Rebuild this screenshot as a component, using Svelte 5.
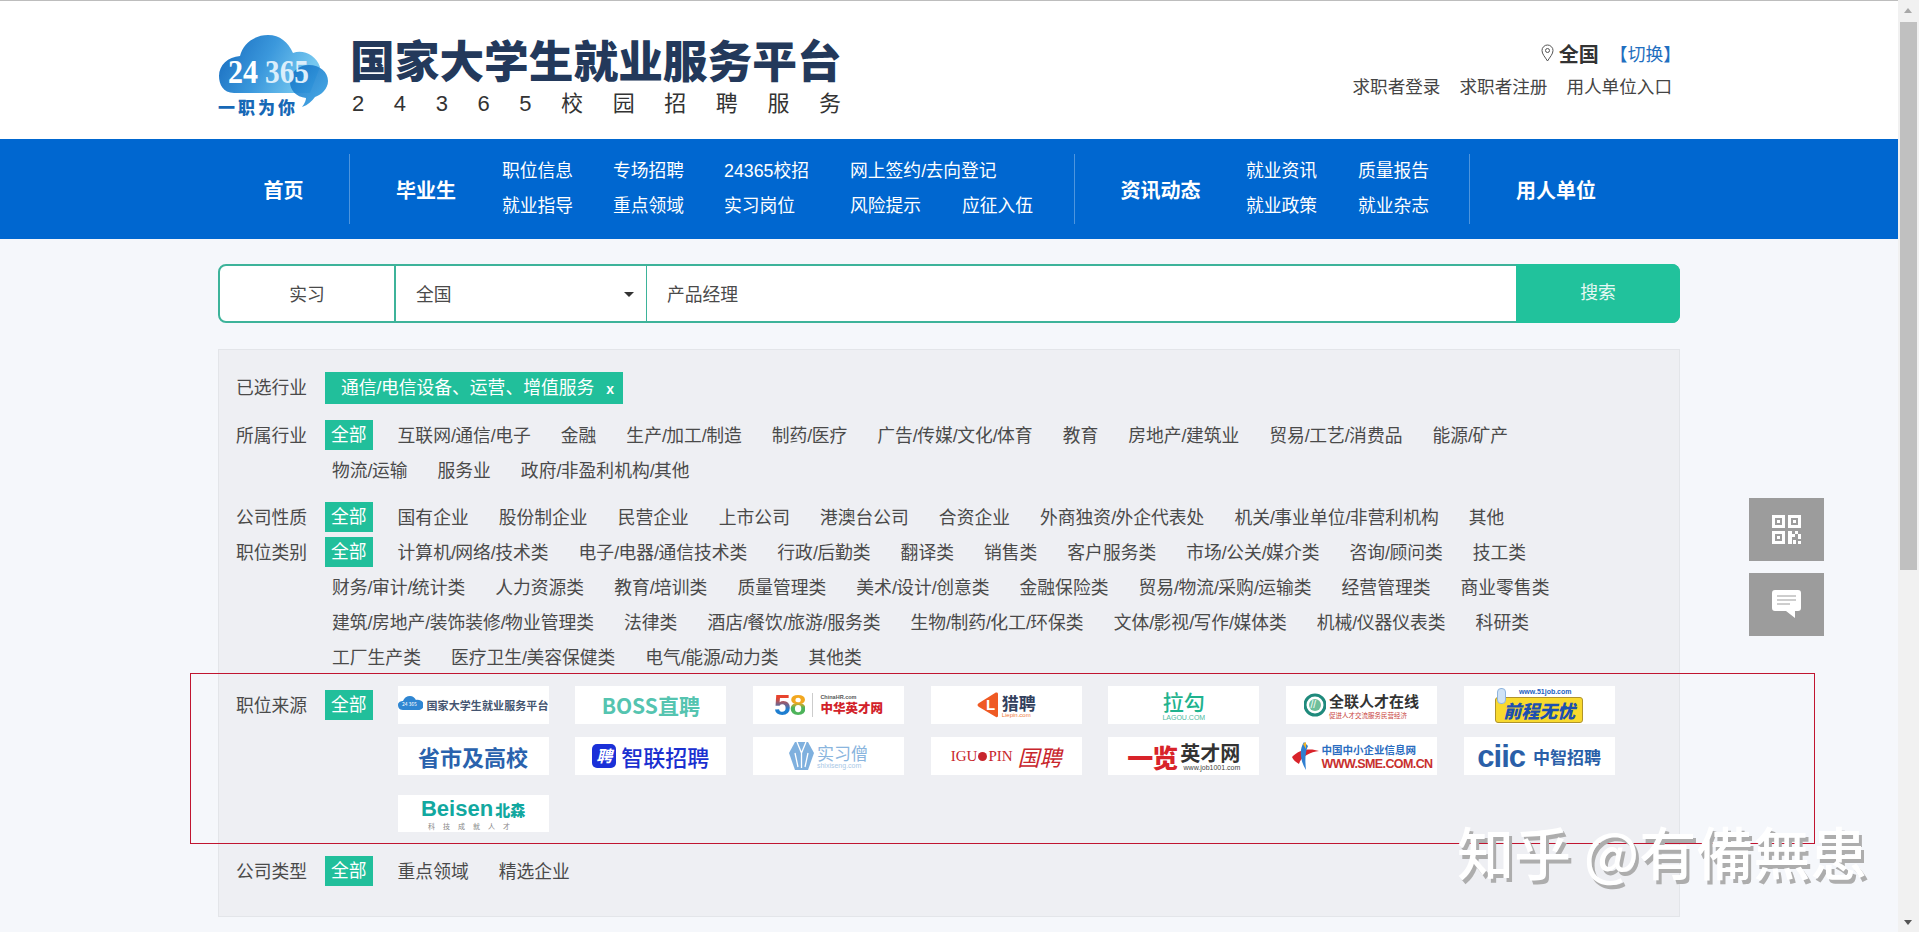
<script>
  const navGraduate = [
    { text: '职位信息' }, { text: '专场招聘' }, { text: '24365校招' }, { text: '网上签约/去向登记', wide: true },
    { text: '就业指导' }, { text: '重点领域' }, { text: '实习岗位' }, { text: '风险提示' }, { text: '应征入伍' }
  ];
  const navNews = ['就业资讯', '质量报告', '就业政策', '就业杂志'];

  const industry = ['互联网/通信/电子', '金融', '生产/加工/制造', '制药/医疗', '广告/传媒/文化/体育', '教育', '房地产/建筑业', '贸易/工艺/消费品', '能源/矿产', '物流/运输', '服务业', '政府/非盈利机构/其他'];
  const nature = ['国有企业', '股份制企业', '民营企业', '上市公司', '港澳台公司', '合资企业', '外商独资/外企代表处', '机关/事业单位/非营利机构', '其他'];
  const category = ['计算机/网络/技术类', '电子/电器/通信技术类', '行政/后勤类', '翻译类', '销售类', '客户服务类', '市场/公关/媒介类', '咨询/顾问类', '技工类', '财务/审计/统计类', '人力资源类', '教育/培训类', '质量管理类', '美术/设计/创意类', '金融保险类', '贸易/物流/采购/运输类', '经营管理类', '商业零售类', '建筑/房地产/装饰装修/物业管理类', '法律类', '酒店/餐饮/旅游/服务类', '生物/制药/化工/环保类', '文体/影视/写作/媒体类', '机械/仪器仪表类', '科研类', '工厂生产类', '医疗卫生/美容保健类', '电气/能源/动力类', '其他类'];
  const companyType = ['重点领域', '精选企业'];
</script>

{#snippet slashed(text)}
  {#each text.split('/') as part, i}{#if i}<span class="sl">/</span>{/if}{part}{/each}
{/snippet}

{#snippet options(list)}
  <div class="opts">
    <span class="all">全部</span>
    {#each list as item}
      <span class="opt">{@render slashed(item)}</span>
    {/each}
  </div>
{/snippet}

<div class="window">
  <div class="page">
    <header class="top">
      <div class="brand">
        <svg class="logo" viewBox="0 0 110 85" width="110" height="85">
          <defs>
            <linearGradient id="cloud" x1="0" y1="0" x2="1" y2="0.3">
              <stop offset="0" stop-color="#1569bd" />
              <stop offset="0.55" stop-color="#3b98dc" />
              <stop offset="1" stop-color="#76c8f0" />
            </linearGradient>
            <linearGradient id="bubble" x1="0" y1="0" x2="1" y2="1">
              <stop offset="0" stop-color="#1470c4" />
              <stop offset="1" stop-color="#3aa6e6" />
            </linearGradient>
          </defs>
          <path d="M16 60C5 60 1 51 1 43C1 32 10 24 22 23C25 10 37 2 50 2C62 2 70 9 75 20C85 16 98 22 102 34L92 60Z" fill="url(#cloud)" />
          <path d="M91 32C102 32 110 39 110 48C110 56 103 62 97 64C94 68 90 72 84 74C87 70 88 67 88 65C78 64 72 57 72 49C72 39 81 32 91 32Z" fill="url(#bubble)" opacity="0.92" />
          <text x="10" y="50" class="logo-a" textLength="30" lengthAdjust="spacingAndGlyphs">24</text>
          <text x="47" y="50" class="logo-b" textLength="44" lengthAdjust="spacingAndGlyphs">365</text>
          <text x="0" y="81" class="logo-c" textLength="77">一职为你</text>
        </svg>
        <div class="brand-text">
          <div class="brand-title">国家大学生就业服务平台</div>
          <div class="brand-sub">
            {#each ['2', '4', '3', '6', '5', '校', '园', '招', '聘', '服', '务'] as c}<span>{c}</span>{/each}
          </div>
        </div>
      </div>
      <div class="account">
        <div class="city">
          <svg width="13" height="18" viewBox="0 0 13 18" fill="none" stroke="#555" stroke-width="1">
            <path d="M6.5 17C4 13 1 10 1 6.5A5.5 5.5 0 0 1 12 6.5C12 10 9 13 6.5 17Z" />
            <circle cx="6.5" cy="6.5" r="2" />
          </svg>
          <b>全国</b>
          <span class="switch">【切换】</span>
        </div>
        <div class="links">
          <span>求职者登录</span>
          <span>求职者注册</span>
          <span>用人单位入口</span>
        </div>
      </div>
    </header>

    <nav class="nav">
      <div class="sec sec-home"><b>首页</b></div>
      <div class="sec sec-grad">
        <b class="grad-label">毕业生</b>
        <div class="grad-links">
          {#each navGraduate as l}
            <span class:wide={l.wide}>{@render slashed(l.text)}</span>
          {/each}
        </div>
      </div>
      <div class="sec sec-news">
        <b class="news-label">资讯动态</b>
        <div class="news-links">
          {#each navNews as l}<span>{l}</span>{/each}
        </div>
      </div>
      <div class="sec-employer"><b>用人单位</b></div>
    </nav>

    <div class="search">
      <div class="s-type">实习</div>
      <div class="s-city">全国<i class="caret"></i></div>
      <div class="s-key">产品经理</div>
      <div class="s-btn">搜索</div>
    </div>

    <section class="panel">
      <div class="row row-picked">
        <div class="label">已选行业</div>
        <div class="tag">{@render slashed('通信/电信设备、运营、增值服务')}<em>x</em></div>
      </div>
      <div class="row row-industry">
        <div class="label">所属行业</div>
        {@render options(industry)}
      </div>
      <div class="row row-nature">
        <div class="label">公司性质</div>
        {@render options(nature)}
      </div>
      <div class="row">
        <div class="label">职位类别</div>
        {@render options(category)}
      </div>
      <div class="row row-source">
        <div class="label">职位来源</div>
        <span class="all">全部</span>
        <div class="sources">
          <div class="src">
            <svg width="26" height="18" viewBox="0 0 26 18"><path d="M5 14C1 14 0 11 0 9C0 6 3 5 5 5C6 2 9 0 12 0C15 0 17 2 18 4C22 3 26 6 26 9C26 12 23 14 20 14Z" fill="#2f86d2" /><text x="4" y="10" class="m1">24 365</text></svg>
            <span class="s-platform">国家大学生就业服务平台</span>
          </div>
          <div class="src"><span class="s-boss">BOSS直聘</span></div>
          <div class="src">
            <span class="s-58"><i class="d5">5</i><i class="d8">8</i></span>
            <i class="s-58-line"></i>
            <span class="stack"><small class="s-hr-top">ChinaHR.com</small><span class="s-hr">中华英才网</span></span>
          </div>
          <div class="src"><span class="s-lp-wrap">
            <svg width="22" height="26" viewBox="0 0 22 26"><path d="M21 2V24C21 25 20 25.500 19 25L2 15C0 14 0 12 2 11L18 1C20 0 21 1 21 2Z" fill="#ef5a24" /><text x="9" y="18" class="m2">L</text></svg>
            <span class="stack"><span class="s-lp">猎聘</span><small class="s-lp-en">Liepin.com</small></span>
          </span></div>
          <div class="src"><span class="stack center"><span class="s-lg">拉勾</span><small class="s-lg-en">LAGOU.COM</small></span></div>
          <div class="src">
            <svg width="22" height="30" viewBox="0 0 22 30"><circle cx="11" cy="15" r="10" fill="#fff" stroke="#1f8a7c" stroke-width="3" /><circle cx="11" cy="15" r="6" fill="#6fbf9b" /><text x="6.500" y="18" class="m3">//</text></svg>
            <span class="stack"><span class="s-ql">全联人才在线</span><small class="s-ql-en">促进人才交流服务民营经济</small></span>
          </div>
          <div class="src src-51">
            <span class="stack center"><small class="s-51-top">www.51job.com</small><span class="s-51">前程无忧</span></span>
            <i class="s-51-hand"></i>
          </div>
          <div class="src"><span class="s-prov">省市及高校</span></div>
          <div class="src">
            <span class="s-zl-icon">聘</span>
            <span class="s-zl">智联招聘</span>
          </div>
          <div class="src">
            <svg width="25" height="30" viewBox="0 0 25 30"><path d="M6 1H19L25 12L19 29H6L0 12Z" fill="#7fb0de" /><path d="M8 1L12.500 12L17 1M12.500 12V27M6 12L9 26M19 12L16 26" fill="none" stroke="#fff" stroke-width="1.300" /></svg>
            <span class="stack"><span class="s-sxs">实习僧</span><small class="s-sxs-en">shixiseng.com</small></span>
          </div>
          <div class="src"><span class="s-gp">IGU<i></i>PIN</span><span class="s-gp-cn">国聘</span></div>
          <div class="src">
            <span class="s-yl">一览</span>
            <span class="stack"><span class="s-yl2">英才网</span><small class="s-yl-en">www.job1001.com</small></span>
          </div>
          <div class="src">
            <svg width="28" height="30" viewBox="0 0 28 30"><path d="M1 16C8 8 20 7 28 10C20 11 10 15 8 23C5 21 2 19 1 16Z" fill="#d8232a" /><path d="M13 1C8 8 9 20 15 29C14 20 14 11 17 5Z" fill="#2f7fd0" /><path d="M12 3L15 1L15 8Z" fill="#f0b428" /></svg>
            <span class="stack"><span class="s-sme">中国中小企业信息网</span><span class="s-sme-en">WWW.SME.COM.CN</span></span>
          </div>
          <div class="src"><span class="s-ciic">ciic</span><span class="s-ciic-cn">中智招聘</span></div>
          <div class="src src-beisen">
            <span class="stack center"><span class="s-bs">Beisen<b>北森</b></span><small class="s-bs-sub">科技成就人才</small></span>
          </div>
        </div>
      </div>
      <div class="row row-type">
        <div class="label">公司类型</div>
        {@render options(companyType)}
      </div>
    </section>
  </div>

  <div class="scrollbar">
    <i class="up"></i>
    <div class="thumb"></div>
    <i class="down"></i>
  </div>

  <div class="float-btns">
    <div class="fbtn">
      <svg width="29" height="29" viewBox="0 0 29 29" fill="#fff">
        <path fill-rule="evenodd" d="M0 0H13V13H0ZM3 3V10H10V3ZM16 0H29V13H16ZM19 3V10H26V3ZM0 16H13V29H0ZM3 19V26H10V19Z" />
        <rect x="5" y="5" width="3" height="3" /><rect x="21" y="5" width="3" height="3" /><rect x="5" y="21" width="3" height="3" />
        <path d="M16 16H20V29H16ZM20 19H23V22H20ZM23 16H26V19H23ZM26 19H29V24H26ZM21 25H24V29H21ZM26 26H29V29H26Z" />
      </svg>
    </div>
    <div class="fbtn">
      <svg width="29" height="29" viewBox="0 0 29 29">
        <path d="M3 0H26C28 0 29 1 29 3V18C29 20 28 21 26 21H23V28L14 21H3C1 21 0 20 0 18V3C0 1 1 0 3 0Z" fill="#fff" />
        <path d="M5 6H24M5 10H24M5 14H18" stroke="#9c9c9c" stroke-width="1" />
      </svg>
    </div>
  </div>

  <div class="annotation"></div>
  <div class="watermark">知乎 @有備無患</div>
</div>

<style>
  :global(body) {
    margin: 0;
    overflow: hidden;
  }

  .window {
    display: flex;
    position: relative;
    height: 932px;
    overflow: hidden;
    font-family: "Liberation Sans", "Noto Sans CJK SC", sans-serif;
    font-size: 17.8px;
    color: #4a4a4a;
    background: #f5f7fb;
  }

  .page {
    flex: 1;
    min-width: 0;
    border-top: 1px solid #bdbdbd;
    background: #f5f7fb;
  }

  .sl {
    letter-spacing: -0.6px;
  }

  /* header */
  .top {
    height: 138px;
    box-sizing: border-box;
    background: #fff;
    padding: 0 226px 0 218px;
    display: flex;
    justify-content: space-between;
  }

  .brand {
    display: flex;
    padding-top: 32px;
    gap: 22px;
  }

  .logo-a, .logo-b {
    font-family: "Liberation Serif", serif;
    font-weight: 700;
    font-size: 34px;
    fill: #fff;
  }

  .logo-b {
    fill: #dbeefb;
  }

  .logo-c {
    font-family: "Noto Sans CJK SC", sans-serif;
    font-weight: 900;
    font-size: 17px;
    fill: #1668b6;
  }

  .brand-text {
    width: 491px;
  }

  .brand-title {
    font-family: "Noto Sans CJK SC", sans-serif;
    font-weight: 900;
    font-size: 44.7px;
    line-height: 50px;
    margin-top: 1px;
    color: #23395b;
    white-space: nowrap;
  }

  .brand-sub {
    display: flex;
    justify-content: space-between;
    font-size: 22px;
    line-height: 30px;
    margin-top: 5px;
    padding-left: 2px;
    color: #333;
  }

  .account {
    padding-top: 40px;
    text-align: right;
  }

  .city {
    display: flex;
    justify-content: flex-end;
    align-items: center;
    height: 24px;
    color: #333;
  }

  .city svg {
    margin-right: 5px;
  }

  .city b {
    font-size: 20px;
  }

  .switch {
    margin-left: 11px;
    margin-right: -9px;
    color: #1f6fc0;
  }

  .links {
    display: flex;
    justify-content: flex-end;
    gap: 19px;
    margin-top: 9px;
    font-size: 17.6px;
    line-height: 26px;
    color: #444;
  }

  /* nav */
  .nav {
    height: 100px;
    box-sizing: border-box;
    background: #0067d0;
    padding: 15px 0 15px 218px;
    display: flex;
    color: #fff;
  }

  .nav b {
    font-size: 20px;
    font-weight: 700;
  }

  .sec {
    height: 70px;
    display: flex;
    align-items: center;
    border-right: 1px solid rgba(255, 255, 255, 0.3);
    box-sizing: border-box;
  }

  .sec-home {
    width: 132px;
    justify-content: center;
  }

  .sec-grad {
    width: 725px;
  }

  .grad-label {
    width: 153px;
    text-align: center;
  }

  .grad-links {
    display: grid;
    grid-template-columns: 111px 111px 126px 112px 112px;
    grid-auto-rows: 35px;
    align-items: center;
    line-height: 35px;
    white-space: nowrap;
  }

  .wide {
    grid-column: span 2;
  }

  .sec-news {
    width: 395px;
  }

  .news-label {
    width: 172px;
    text-align: center;
  }

  .news-links {
    display: grid;
    grid-template-columns: 112px 111px;
    grid-auto-rows: 35px;
    line-height: 35px;
  }

  .sec-employer {
    height: 70px;
    display: flex;
    align-items: center;
    padding-left: 46px;
  }

  /* search */
  .search {
    display: flex;
    width: 1462px;
    height: 59px;
    box-sizing: border-box;
    margin: 25px 0 0 218px;
    border: 2px solid #3db39a;
    border-radius: 8px;
    background: #fff;
    line-height: 59px;
  }

  .s-type {
    width: 174px;
    text-align: center;
    border-right: 2px solid #3db39a;
  }

  .s-city {
    width: 251px;
    box-sizing: border-box;
    padding-left: 20px;
    position: relative;
    border-right: 1px solid #3db39a;
  }

  .caret {
    position: absolute;
    right: 12px;
    top: 26px;
    border: 5px solid transparent;
    border-top: 5px solid #333;
    border-bottom: 0;
  }

  .s-key {
    flex: 1;
    padding-left: 20px;
  }

  .s-btn {
    width: 164px;
    margin: -2px -2px -2px 0;
    line-height: 59px;
    text-align: center;
    background: #21c29c;
    color: #e6f8f3;
    border-radius: 0 8px 8px 0;
  }

  /* filter panel */
  .panel {
    width: 1462px;
    height: 568px;
    box-sizing: border-box;
    margin: 26px 0 0 218px;
    padding-top: 22px;
    background: #eeeff3;
    border: 1px solid #e3e5e9;
  }

  .row {
    display: flex;
    align-items: flex-start;
    padding-left: 17px;
  }

  .label {
    width: 89px;
    flex: none;
    height: 35px;
    line-height: 36px;
  }

  .row-picked .label {
    height: 32px;
    line-height: 32px;
  }

  .tag {
    height: 32px;
    line-height: 32px;
    padding: 0 9px 0 16px;
    background: #21bf9b;
    color: #fff;
    white-space: nowrap;
  }

  .tag em {
    font-style: normal;
    font-weight: 700;
    font-size: 14px;
    margin-left: 12px;
  }

  .row-industry {
    margin-top: 14px;
  }

  .row-nature {
    margin-top: 12px;
  }

  .row-source {
    margin-top: 13px;
  }

  .row-type {
    margin-top: 22px;
  }

  .opts {
    display: flex;
    flex-wrap: wrap;
    width: 1275px;
  }

  .all {
    flex: none;
    height: 30px;
    line-height: 30px;
    margin: 2px 18px 0 0;
    padding: 0 6px;
    background: #21bf9b;
    color: #fff;
  }

  .opt {
    height: 35px;
    line-height: 36px;
    padding: 0 7px;
    margin-right: 16px;
    white-space: nowrap;
  }

  .sources {
    display: grid;
    grid-template-columns: repeat(7, 151px);
    column-gap: 26.7px;
    row-gap: 13px;
    margin: -2px 0 0 7px;
  }

  /* source logos */
  .src {
    height: 38px;
    background: #fff;
    display: flex;
    align-items: center;
    justify-content: center;
    overflow: hidden;
    white-space: nowrap;
    gap: 3px;
    font-family: "Noto Sans CJK SC", sans-serif;
  }

  .src small {
    display: block;
    line-height: 1;
    font-family: "Liberation Sans", sans-serif;
  }

  .src i {
    font-style: normal;
  }

  .stack {
    display: flex;
    flex-direction: column;
    justify-content: center;
  }

  .stack.center {
    align-items: center;
  }

  .m1 {
    font-size: 5px;
    fill: #fff;
  }

  .m2 {
    font-family: "Liberation Sans", sans-serif;
    font-weight: 700;
    font-size: 15px;
    fill: #fff;
  }

  .m3 {
    font-family: "Liberation Sans", sans-serif;
    font-size: 10px;
    fill: #fff;
  }

  .s-platform {
    font-size: 11px;
    font-weight: 700;
    color: #43546f;
    letter-spacing: 0.1px;
  }

  .s-boss {
    font-size: 21px;
    font-weight: 700;
    line-height: 1;
    color: #55c4b0;
  }

  .s-58 {
    font-family: "Liberation Sans", sans-serif;
    font-weight: 700;
    font-size: 30px;
    letter-spacing: -1px;
    line-height: 1;
  }

  .d5, .d8 {
    -webkit-background-clip: text;
    background-clip: text;
    color: transparent;
  }

  .d5 {
    background-image: linear-gradient(#e8432d 30%, #1e7ed0 65%);
  }

  .d8 {
    background-image: linear-gradient(#f2a71f 45%, #4db35a 60%);
  }

  .s-58-line {
    width: 1px;
    height: 24px;
    background: #ccc;
    margin: 0 4px;
  }

  .s-hr-top {
    font-size: 5.5px;
    font-weight: 700;
    color: #555;
  }

  .s-hr {
    font-size: 12.5px;
    font-weight: 900;
    line-height: 15px;
    color: #d2222a;
  }

  .s-prov {
    font-size: 22px;
    font-weight: 700;
    color: #2a62ad;
  }

  .s-zl-icon {
    width: 24px;
    height: 24px;
    line-height: 23px;
    text-align: center;
    border-radius: 5px;
    background: #1a30d8;
    color: #fff;
    font-size: 16px;
    font-style: italic;
    font-weight: 700;
  }

  .s-zl {
    font-size: 22px;
    font-weight: 500;
    color: #1a30d0;
    margin-left: 2px;
  }

  .s-sxs {
    font-size: 17px;
    line-height: 19px;
    color: #8ab5de;
  }

  .s-sxs-en {
    font-size: 7px;
    color: #a9c8e6;
  }

  .s-lp-wrap {
    display: flex;
    align-items: center;
    gap: 3px;
  }

  .s-lp {
    font-size: 17px;
    font-weight: 700;
    line-height: 19px;
    color: #33415e;
  }

  .s-lp-en {
    font-size: 6px;
    color: #ef7a3c;
  }

  .s-lg {
    font-size: 21px;
    font-weight: 500;
    line-height: 25px;
    color: #1fb38e;
  }

  .s-lg-en {
    font-size: 7px;
    color: #4fb9a0;
  }

  .s-ql {
    font-family: "Liberation Serif", "Noto Sans CJK SC", serif;
    font-size: 15px;
    font-weight: 700;
    line-height: 20px;
    color: #333;
  }

  .s-ql-en {
    font-size: 6.500px;
    font-family: "Noto Sans CJK SC", sans-serif !important;
    color: #c8423a;
  }

  .src-51 {
    position: relative;
  }

  .src-51 .stack {
    width: 88px;
    height: 38px;
    justify-content: flex-start;
  }

  .s-51-top {
    font-size: 7px;
    font-weight: 700;
    color: #2260c0;
    padding: 2px 0 2px 12px;
  }

  .s-51 {
    width: 88px;
    height: 26px;
    border-radius: 3px;
    border: 1px solid #b0932a;
    box-sizing: border-box;
    background: #f8d92e;
    color: #1c4fb0;
    font-size: 18px;
    font-weight: 900;
    font-style: italic;
    line-height: 24px;
    text-align: center;
  }

  .s-51-hand {
    position: absolute;
    left: 33px;
    top: 2px;
    width: 9px;
    height: 16px;
    border-radius: 4px;
    background: #cfe2f5;
    border: 1px solid #8fb4de;
    box-sizing: border-box;
  }

  .s-gp {
    font-family: "Liberation Serif", serif;
    font-size: 15px;
    color: #c8252c;
    display: flex;
    align-items: center;
  }

  .s-gp i {
    width: 9px;
    height: 9px;
    border-radius: 50%;
    background: #c8252c;
    margin: 0 1px;
  }

  .s-gp-cn {
    font-size: 22px;
    font-style: italic;
    color: #c8252c;
    margin-left: 2px;
  }

  .s-yl {
    font-size: 26px;
    font-weight: 900;
    letter-spacing: -1px;
    color: #d8232a;
  }

  .s-yl2 {
    font-size: 20px;
    font-weight: 700;
    line-height: 23px;
    color: #333;
  }

  .s-yl-en {
    font-size: 7px;
    text-align: right;
    color: #444;
  }

  .s-sme {
    font-size: 10.500px;
    font-weight: 700;
    line-height: 15px;
    color: #2a6cc0;
  }

  .s-sme-en {
    font-family: "Liberation Sans", sans-serif;
    font-size: 12.500px;
    font-weight: 700;
    line-height: 14px;
    letter-spacing: -0.6px;
    color: #c8302e;
  }

  .s-ciic {
    font-family: "Liberation Sans", sans-serif;
    font-size: 31px;
    font-weight: 700;
    line-height: 1;
    letter-spacing: -1px;
    color: #2a5fa8;
  }

  .s-ciic-cn {
    font-size: 17px;
    font-weight: 700;
    margin-left: 5px;
    color: #2a5fa8;
  }

  .src-beisen {
    margin-top: 7px;
    height: 37px;
    grid-column: 1;
  }

  .s-bs {
    font-family: "Liberation Sans", sans-serif;
    font-size: 22px;
    font-weight: 700;
    line-height: 24px;
    color: #12a8a0;
  }

  .s-bs b {
    font-family: "Noto Sans CJK SC", sans-serif;
    font-size: 15px;
    margin-left: 2px;
  }

  .s-bs-sub {
    font-family: "Noto Sans CJK SC", sans-serif !important;
    font-size: 7px;
    letter-spacing: 8px;
    color: #888;
    margin-top: 1px;
  }

  /* scrollbar */
  .scrollbar {
    width: 21px;
    flex: none;
    box-sizing: border-box;
    padding: 0 2px;
    background: #f1f1f1;
    position: relative;
  }

  .thumb {
    margin-top: 22px;
    height: 548px;
    background: #c0c0c0;
  }

  .up, .down {
    position: absolute;
    left: 6px;
    border: 4.500px solid transparent;
  }

  .up {
    top: 8px;
    border-top: 0;
    border-bottom: 5px solid #a8a8a8;
  }

  .down {
    bottom: 7px;
    border-bottom: 0;
    border-top: 5px solid #555;
  }

  /* floating actions */
  .float-btns {
    position: absolute;
    left: 1749px;
    top: 498px;
    display: flex;
    flex-direction: column;
    gap: 12px;
  }

  .fbtn {
    width: 75px;
    height: 63px;
    background: #9c9c9c;
    display: flex;
    align-items: center;
    justify-content: center;
  }

  /* red box drawn over the screenshot */
  .annotation {
    position: absolute;
    left: 190px;
    top: 673px;
    width: 1623px;
    height: 169px;
    border: 1px solid #c01530;
    pointer-events: none;
  }

  .watermark {
    position: absolute;
    left: 1457px;
    top: 810px;
    font-family: "Noto Sans CJK SC", sans-serif;
    font-size: 57px;
    font-weight: 500;
    line-height: 80px;
    white-space: nowrap;
    color: #fff;
    text-shadow: 3px 4px 0 #adadad;
    pointer-events: none;
  }
</style>
